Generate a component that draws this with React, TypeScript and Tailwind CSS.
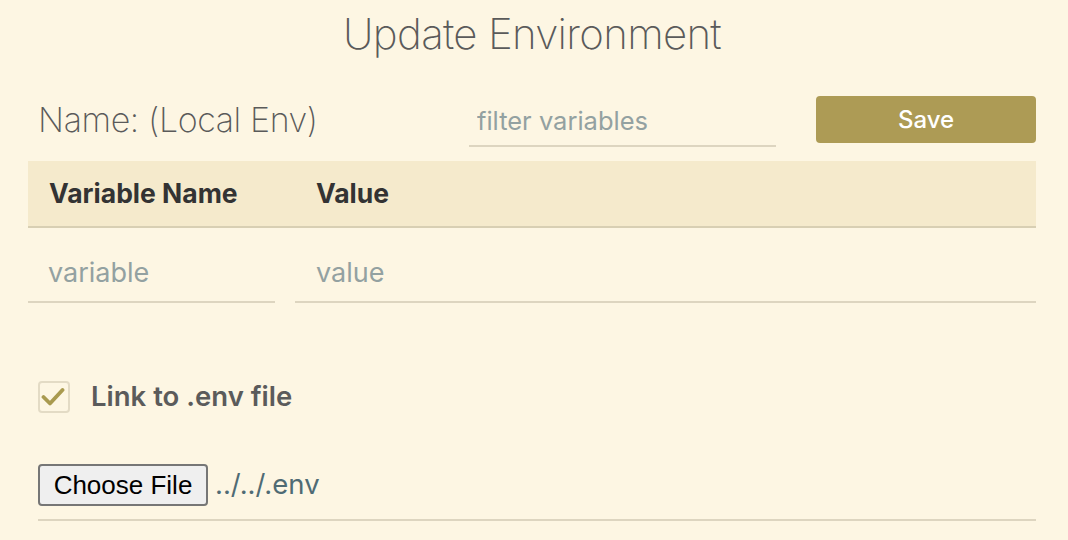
import React from 'react';

export default function App() {
  return (
    <div className="min-h-screen bg-[#fdf6e3] font-['Inter',sans-serif]">
      <div className="ml-[28px] w-[1008px]">
        <h1 className="pt-[8px] text-center text-[42px] font-extralight leading-[52px] tracking-[-0.7px] text-[#5a5a5a]">
          Update Environment
        </h1>

        <div className="mt-[36px] flex h-[47px] items-center">
          <div className="w-[441px] pl-[10px] text-[34px] font-extralight leading-none tracking-[-0.4px] text-[#5a5a5a]">
            Name: (Local Env)
          </div>
          <input
            placeholder="filter variables"
            className="mt-[4px] h-[50px] w-[307px] border-b-2 border-[#ddd5c0] bg-transparent pl-[8px] text-[25.5px] text-[#586e75] outline-none placeholder:text-[#93a1a1]"
          />
          <button className="ml-auto h-[47px] w-[220px] rounded-[4px] bg-[#ad9b55] text-[24px] font-medium text-white">
            Save
          </button>
        </div>

        <div className="mt-[18px] grid h-[67px] grid-cols-[267px_1fr] items-center border-b-2 border-[#d8cfb3] bg-[#f5eacc] text-[26.5px] font-bold text-[#333333]">
          <div className="pl-[21px]">Variable Name</div>
          <div className="pl-[21px]">Value</div>
        </div>

        <div className="grid grid-cols-[247px_1fr] gap-x-[20px] pt-[16px]">
          <input
            placeholder="variable"
            className="h-[59px] border-b-2 border-[#ddd5c0] bg-transparent pl-[20px] text-[27px] text-[#586e75] outline-none placeholder:text-[#93a1a1]"
          />
          <input
            placeholder="value"
            className="h-[59px] border-b-2 border-[#ddd5c0] bg-transparent pl-[21px] text-[27px] text-[#586e75] outline-none placeholder:text-[#93a1a1]"
          />
        </div>

        <div className="pl-[10px]">
          <label className="mt-[78px] flex h-[32px] items-center gap-[21px]">
            <span className="flex h-[32px] w-[32px] items-center justify-center rounded-[4px] border-2 border-[#e3dbc5] bg-[#fdf6e3]">
              <svg width="24" height="20" viewBox="0 0 24 20" fill="none" className="-ml-[2px]">
                <path d="M2.5 10 L9 16.5 L21.5 3" stroke="#a99a4f" strokeWidth="3.8" strokeLinecap="round" strokeLinejoin="round" />
              </svg>
            </span>
            <span className="text-[27.5px] font-semibold text-[#5b5b5b]">Link to .env file</span>
          </label>

          <div className="mt-[51px] flex items-center gap-[7px] border-b-2 border-[#ddd5c0] pb-[13px]">
            <button className="h-[42px] w-[170px] rounded-[4px] border-2 border-[#767676] bg-[#efefef] font-['Liberation_Sans',sans-serif] text-[26px] text-black">
              Choose File
            </button>
            <span className="text-[27.5px] text-[#4f6b74]">../../.env</span>
          </div>
        </div>
      </div>
    </div>
  );
}
